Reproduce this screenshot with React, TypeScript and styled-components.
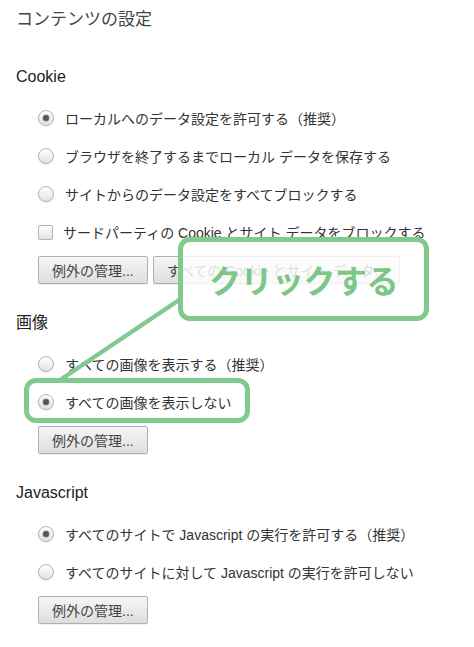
import React from 'react';
import styled, { createGlobalStyle } from 'styled-components';

const GlobalStyle = createGlobalStyle`
	html, body {
		margin: 0;
		padding: 0;
		background: #ffffff;
	}
	body {
		font-family: 'Liberation Sans', 'Noto Sans CJK JP', sans-serif;
		color: #333333;
	}
`;

const Page = styled.main`
	position: relative;
	width: 474px;
	height: 647px;
	overflow: hidden;
	padding: 8px 0 0 16px;
	box-sizing: border-box;
`;

const PageTitle = styled.h1`
	margin: 0;
	font-size: 17px;
	font-weight: 400;
	line-height: 24px;
	color: #444444;
`;

const Section = styled.section`
	margin-top: ${({ first }: { first?: boolean }) => (first ? '35px' : '29px')};
`;

const SectionTitle = styled.h2`
	margin: 0;
	font-size: 16px;
	font-weight: 400;
	line-height: 20px;
	color: #222222;
`;

const OptionList = styled.div`
	margin-top: 20px;
	padding-left: 22px;
	display: flex;
	flex-direction: column;
	row-gap: 16px;
`;

const OptionRow = styled.label`
	display: flex;
	align-items: center;
	height: 22px;
	font-size: 14px;
	color: #333333;
	white-space: nowrap;
`;

const Radio = styled.span`
	flex: none;
	position: relative;
	width: 16px;
	height: 16px;
	margin-right: 11px;
	border-radius: 50%;
	border: 1px solid #b4b4b4;
	box-sizing: border-box;
	background: linear-gradient(#ffffff, #e2e2e2);
	box-shadow: 0 1px 1px rgba(0, 0, 0, 0.08);

	&::after {
		content: '';
		display: ${({ checked }: { checked?: boolean }) => (checked ? 'block' : 'none')};
		position: absolute;
		left: 4px;
		top: 4px;
		width: 6px;
		height: 6px;
		border-radius: 50%;
		background: #555555;
		box-shadow: 0 0 1px 1px rgba(0, 0, 0, 0.15);
	}
`;

const Checkbox = styled.span`
	flex: none;
	width: 15px;
	height: 15px;
	margin-right: 10px;
	border-radius: 2px;
	border: 1px solid #b4b4b4;
	box-sizing: border-box;
	background: linear-gradient(#ffffff, #e4e4e4);
`;

const ButtonRow = styled.div`
	display: flex;
	column-gap: 5px;
	margin-top: 13px;
	padding-left: 22px;
`;

const Button = styled.button`
	height: 28px;
	padding: 0 13px;
	font-family: 'Liberation Sans', 'Noto Sans CJK JP', sans-serif;
	font-size: 14px;
	color: #444444;
	border: 1px solid #b0b0b0;
	border-radius: 2px;
	background: linear-gradient(#f6f6f6, #dedede);
	box-shadow: 0 1px 0 rgba(0, 0, 0, 0.06);
	white-space: nowrap;
`;

const Callout = styled.div`
	position: absolute;
	left: 178px;
	top: 237px;
	width: 251px;
	height: 84px;
	box-sizing: border-box;
	border: 5px solid #82c98d;
	border-radius: 12px;
	background: rgba(255, 255, 255, 0.82);
	display: flex;
	align-items: center;
	justify-content: center;
	font-family: 'Noto Sans CJK JP', sans-serif;
	font-weight: 700;
	font-size: 32px;
	letter-spacing: -0.5px;
	color: #7cc688;
`;

const Highlight = styled.div`
	position: absolute;
	left: 24px;
	top: 378px;
	width: 226px;
	height: 45px;
	box-sizing: border-box;
	border: 5px solid #82c98d;
	border-radius: 12px;
`;

const Pointer = styled.svg`
	position: absolute;
	left: 0;
	top: 0;
	pointer-events: none;
`;

type Option = { label: string; checked?: boolean; box?: boolean };

const cookieOptions: Option[] = [
	{ label: 'ローカルへのデータ設定を許可する（推奨）', checked: true },
	{ label: 'ブラウザを終了するまでローカル データを保存する' },
	{ label: 'サイトからのデータ設定をすべてブロックする' },
	{ label: 'サードパーティの Cookie とサイト データをブロックする', box: true }
];

const imageOptions: Option[] = [
	{ label: 'すべての画像を表示する（推奨）' },
	{ label: 'すべての画像を表示しない', checked: true }
];

const scriptOptions: Option[] = [
	{ label: 'すべてのサイトで Javascript の実行を許可する（推奨）', checked: true },
	{ label: 'すべてのサイトに対して Javascript の実行を許可しない' }
];

const Options = ({ items }: { items: Option[] }) => (
	<OptionList>
		{items.map((o) => (
			<OptionRow key={o.label}>
				{o.box ? <Checkbox /> : <Radio checked={o.checked} />}
				{o.label}
			</OptionRow>
		))}
	</OptionList>
);

const App = () => {
	return (
		<>
			<GlobalStyle />
			<Page>
				<PageTitle>コンテンツの設定</PageTitle>

				<Section first>
					<SectionTitle>Cookie</SectionTitle>
					<Options items={cookieOptions} />
					<ButtonRow>
						<Button>例外の管理...</Button>
						<Button>すべての Cookie とサイト データ...</Button>
					</ButtonRow>
				</Section>

				<Section>
					<SectionTitle>画像</SectionTitle>
					<Options items={imageOptions} />
					<ButtonRow>
						<Button>例外の管理...</Button>
					</ButtonRow>
				</Section>

				<Section>
					<SectionTitle>Javascript</SectionTitle>
					<Options items={scriptOptions} />
					<ButtonRow>
						<Button>例外の管理...</Button>
					</ButtonRow>
				</Section>

				<Pointer width='474' height='647'>
					<line x1='182' y1='298' x2='60' y2='380' stroke='#82c98d' strokeWidth='4.5' />
				</Pointer>
				<Highlight />
				<Callout>クリックする</Callout>
			</Page>
		</>
	);
};

export default App;
